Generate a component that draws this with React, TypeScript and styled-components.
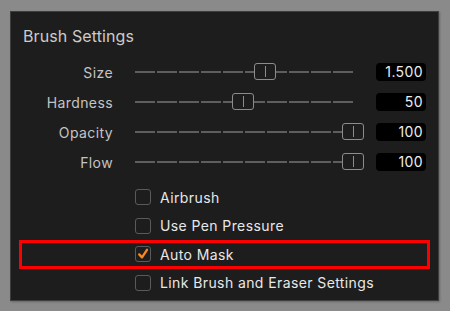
import React from "react";
import styled, { createGlobalStyle } from "styled-components";

const Global = createGlobalStyle`
  html, body { margin: 0; padding: 0; }
  body {
    background: #8a8a8a;
    font-family: Inter, "Noto Sans", "Liberation Sans", sans-serif;
    -webkit-font-smoothing: antialiased;
  }
`;

const Page = styled.div`
  width: 450px;
  height: 311px;
  padding: 11px 11px 10px 10px;
  box-sizing: border-box;
`;

const Panel = styled.div`
  width: 429px;
  height: 290px;
  box-sizing: border-box;
  background: #1d1d1d;
  border: 1px solid #3e3e3e;
  box-shadow: 1px 1px 2px rgba(0, 0, 0, 0.25);
  padding-top: 14px;
  display: flex;
  flex-direction: column;
`;

const Title = styled.div`
  font-size: 16px;
  line-height: 20px;
  color: #cbcbcb;
  padding-left: 12px;
  margin-bottom: 11px;
  letter-spacing: 0.1px;
`;

const SliderGrid = styled.div`
  display: grid;
  grid-template-columns: 101px 220px 50px;
  column-gap: 22px;
  grid-auto-rows: 30px;
  align-items: center;
`;

const Label = styled.div`
  text-align: right;
  font-size: 14px;
  letter-spacing: 0.4px;
  color: #c4c4c4;
  margin-right: -1px;
`;

const Track = styled.div`
  position: relative;
  height: 30px;
  margin-left: 1px;
  &::before {
    content: "";
    position: absolute;
    left: 0;
    right: 0;
    top: 14px;
    height: 1.5px;
    background: repeating-linear-gradient(
      to right,
      #5e5e5e 0px,
      #5e5e5e 20px,
      transparent 20px,
      transparent 22px
    );
  }
`;

const Thumb = styled.div`
  position: absolute;
  top: 6px;
  width: 22px;
  height: 17px;
  margin-left: -11px;
  box-sizing: border-box;
  border: 1.5px solid #8c8c8c;
  border-radius: 3px;
  background: #1d1d1d;
  &::after {
    content: "";
    position: absolute;
    left: 50%;
    top: 2px;
    bottom: 2px;
    width: 1px;
    margin-left: -0.5px;
    background: #8c8c8c;
  }
`;

const Value = styled.div`
  height: 18px;
  line-height: 18px;
  background: #000;
  border-radius: 4px;
  color: #ececec;
  font-size: 14px;
  letter-spacing: 0.4px;
  text-align: right;
  padding-right: 3px;
  box-sizing: border-box;
`;

const CheckList = styled.div`
  margin-top: 6px;
  display: flex;
  flex-direction: column;
`;

const CheckRow = styled.label<{ $highlight?: boolean }>`
  display: flex;
  align-items: center;
  gap: 9px;
  height: 28.5px;
  margin: 0 8px;
  padding-left: 116px;
  box-sizing: border-box;
  box-shadow: ${(p) => (p.$highlight ? "inset 0 0 0 3px #ff0000" : "none")};
  font-size: 14px;
  letter-spacing: 0.4px;
  color: #e8e8e8;
`;

const Box = styled.span`
  width: 16px;
  height: 16px;
  box-sizing: border-box;
  border: 1px solid #5a5a5a;
  border-radius: 3px;
  background: #1d1d1d;
  display: flex;
  align-items: center;
  justify-content: center;
  flex-shrink: 0;
`;

const sliders = [
  { label: "Size", value: "1.500", pct: 0.6 },
  { label: "Hardness", value: "50", pct: 0.5 },
  { label: "Opacity", value: "100", pct: 1 },
  { label: "Flow", value: "100", pct: 1 },
];

const checks = [
  { label: "Airbrush", checked: false },
  { label: "Use Pen Pressure", checked: false },
  { label: "Auto Mask", checked: true, highlight: true },
  { label: "Link Brush and Eraser Settings", checked: false },
];

export default function App() {
  return (
    <>
      <Global />
      <Page>
        <Panel>
          <Title>Brush Settings</Title>
          <SliderGrid>
            {sliders.map((s) => (
              <React.Fragment key={s.label}>
                <Label>{s.label}</Label>
                <Track>
                  <Thumb style={{ left: `${-2 + s.pct * 220}px` }} />
                </Track>
                <Value>{s.value}</Value>
              </React.Fragment>
            ))}
          </SliderGrid>
          <CheckList>
            {checks.map((c) => (
              <CheckRow key={c.label} $highlight={c.highlight}>
                <Box>
                  {c.checked && (
                    <svg width="12" height="12" viewBox="0 0 12 12">
                      <path
                        d="M2.2 6.4 L5 9.4 L10 1.8"
                        fill="none"
                        stroke="#f58a1f"
                        strokeWidth="2.3"
                        strokeLinecap="round"
                        strokeLinejoin="round"
                      />
                    </svg>
                  )}
                </Box>
                {c.label}
              </CheckRow>
            ))}
          </CheckList>
        </Panel>
      </Page>
    </>
  );
}
